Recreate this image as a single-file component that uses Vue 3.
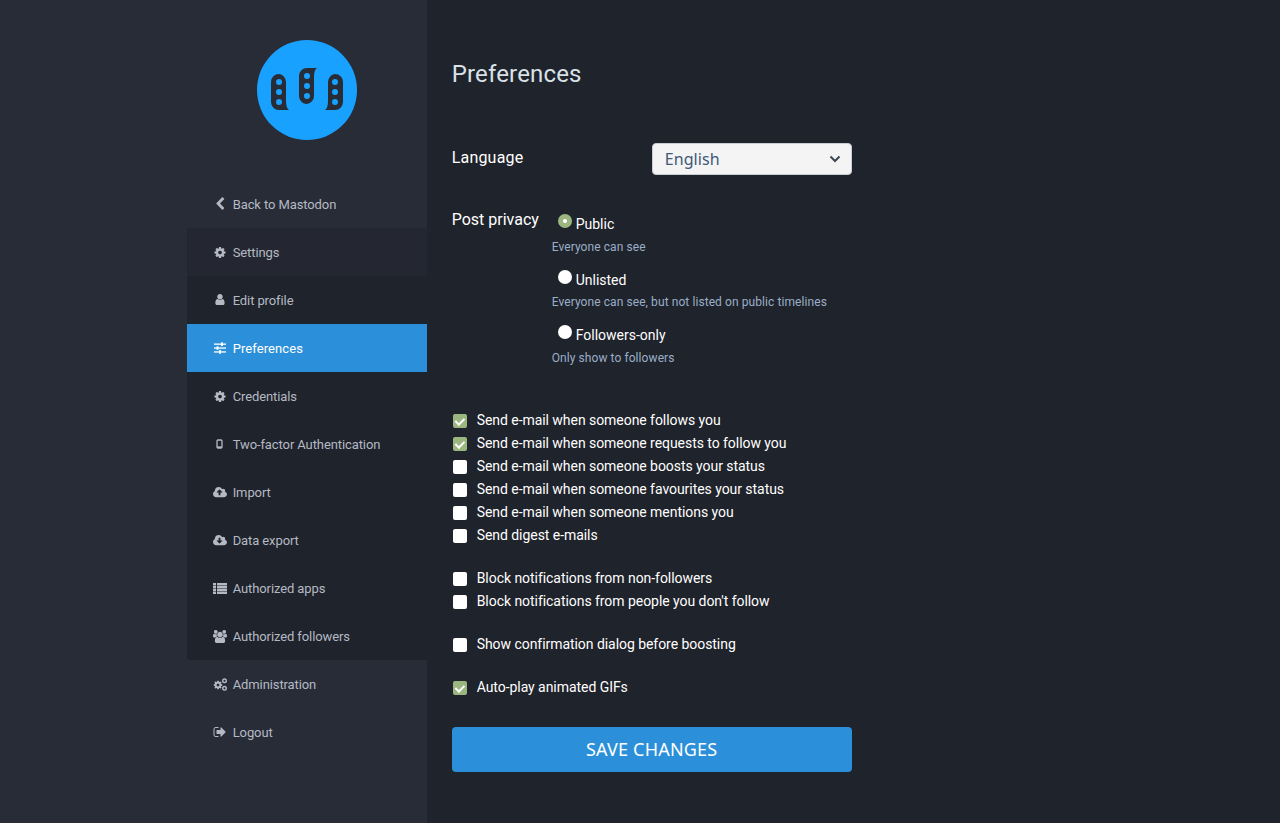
<script setup>
const cog = 'M1152 896q0-106-75-181t-181-75-181 75-75 181 75 181 181 75 181-75 75-181zm512-109v222q0 12-8 23t-20 13l-185 28q-19 54-39 91 35 50 107 138 10 12 10 25t-9 23q-27 37-99 108t-94 71q-12 0-26-9l-138-108q-44 23-91 38-16 136-29 186-7 28-36 28h-222q-14 0-24.500-8.500t-11.500-21.500l-28-184q-49-16-90-37l-141 107q-10 9-25 9-14 0-25-11-126-114-165-168-7-10-7-23 0-12 8-23 15-21 51-66.500t54-70.500q-27-50-41-99l-183-27q-13-2-21-12.500t-8-23.500v-222q0-12 8-23t19-13l186-28q14-46 39-92-40-57-107-138-10-12-10-24 0-10 9-23 26-36 98.500-107.500t94.500-71.500q13 0 26 10l138 107q44-23 91-38 16-136 29-186 7-28 36-28h222q14 0 24.500 8.500t11.500 21.500l28 184q49 16 90 37l142-107q9-9 24-9 13 0 25 10 129 119 165 170 7 8 7 22 0 12-8 23-15 21-51 66.500t-54 70.500q26 50 41 98l183 28q13 2 21 12.500t8 23.500z'
const cloudTail = 'zm640 288q0 159-112.500 271.500t-271.500 112.500h-1088q-185 0-316.500-131.500t-131.500-316.500q0-130 70-240t188-165q-2-30-2-43 0-212 150-362t362-150q156 0 285.500 87t188.500 231q71-62 166-62 106 0 181 75t75 181q0 76-41 138 130 31 213.500 135.500t83.500 238.500z'
const icons = {
  back: { vb: '0 0 1792 1792', w: 14, d: 'M1427 301l-531 531 531 531q19 19 19 45t-19 45l-166 166q-19 19-45 19t-45-19l-742-742q-19-19-19-45t19-45l742-742q19-19 45-19t45 19l166 166q19 19 19 45t-19 45z' },
  cog: { vb: '128 0 1536 1792', w: 12, d: cog },
  user: { vb: '128 128 1408 1664', w: 11, d: 'M1536 1399q0 109-62.500 187t-150.500 78h-854q-88 0-150.500-78t-62.500-187q0-85 8.500-160.500t31.500-152 58.500-131 94-89 134.500-34.500q131 128 313 128t313-128q76 0 134.500 34.500t94 89 58.500 131 31.500 152 8.500 160.500zm-256-887q0 159-112.500 271.500t-271.500 112.500-271.500-112.500-112.500-271.500 112.500-271.500 271.500-112.500 271.500 112.500 112.500 271.500z' },
  upload: { vb: '0 128 1920 1536', w: 14, d: 'M1280 864q0-14-9-23l-352-352q-9-9-23-9t-23 9l-351 351q-10 12-10 24 0 14 9 23t23 9h224v352q0 13 9.500 22.500t22.500 9.500h192q13 0 22.500-9.500t9.500-22.500v-352h224q13 0 22.500-9.500t9.500-22.500' + cloudTail },
  download: { vb: '0 128 1920 1536', w: 14, d: 'M1280 928q0-14-9-23t-23-9h-224v-352q0-13-9.500-22.500t-22.500-9.500h-192q-13 0-22.500 9.500t-9.500 22.500v352h-224q-13 0-22.500 9.500t-9.500 22.500q0 14 9 23l352 352q9 9 23 9t23-9l351-351q10-12 10-24' + 'zm640 224q0 159-112.500 271.500t-271.500 112.500h-1088q-185 0-316.500-131.500t-131.500-316.500q0-130 70-240t188-165q-2-30-2-43 0-212 150-362t362-150q156 0 285.500 87t188.500 231q71-62 166-62 106 0 181 75t75 181q0 76-41 138 130 31 213.500 135.500t83.500 238.500z' },
  users: { vb: '0 128 1920 1536', w: 14, d: 'M593 896q-162 5-265 128h-134q-82 0-138-40.500t-56-118.500q0-353 124-353 6 0 43.500 21t97.500 42.500 119 21.500q67 0 133-23-5 37-5 66 0 139 81 256zm1071 637q0 120-73 189.500t-194 69.500h-874q-121 0-194-69.500t-73-189.500q0-53 3.500-103.500t14-109 26.500-108.500 43-97.500 62-81 85.500-53.500 111.500-20q10 0 43 21.500t73 48 107 48 135 21.500 135-21.500 107-48 73-48 43-21.500q61 0 111.500 20t85.500 53.500 62 81 43 97.500 26.500 108.500 14 109 3.500 103.500zm-1024-1277q0 106-75 181t-181 75-181-75-75-181 75-181 181-75 181 75 75 181zm704 384q0 159-112.500 271.500t-271.500 112.500-271.500-112.500-112.500-271.500 112.500-271.500 271.500-112.500 271.500 112.500 112.500 271.500zm576 225q0 78-56 118.500t-138 40.500h-134q-103-123-265-128 81-117 81-256 0-29-5-66 66 23 133 23 59 0 119-21.500t97.500-42.500 43.500-21q124 0 124 353zm-128-609q0 106-75 181t-181 75-181-75-75-181 75-181 181-75 181 75 75 181z' },
  logout: { vb: '0 128 1664 1536', w: 13, d: 'M704 1440q0 4 1 20t.5 26.500-3 23.500-10 19.500-20.500 6.500h-320q-119 0-203.500-84.500t-84.500-203.500v-704q0-119 84.500-203.500t203.500-84.500h320q13 0 22.500 9.500t9.500 22.500q0 4 1 20t.5 26.500-3 23.500-10 19.500-20.500 6.500h-320q-66 0-113 47t-47 113v704q0 66 47 113t113 47h312l11.500 1 11.500 3 8 5.500 7 9 2 13.500zm928-544q0 26-19 45l-544 544q-19 19-45 19t-45-19-19-45v-288h-448q-26 0-45-19t-19-45v-384q0-26 19-45t45-19h448v-288q0-26 19-45t45-19 45 19l544 544q19 19 19 45z' },
}
const subNav = [
  { label: 'Preferences', icon: 'sliders', active: true },
  { label: 'Credentials', icon: 'cog' },
  { label: 'Two-factor Authentication', icon: 'mobile' },
  { label: 'Import', icon: 'upload' },
  { label: 'Data export', icon: 'download' },
  { label: 'Authorized apps', icon: 'list' },
  { label: 'Authorized followers', icon: 'users' },
]
const radios = [
  { label: 'Public', hint: 'Everyone can see', checked: true },
  { label: 'Unlisted', hint: 'Everyone can see, but not listed on public timelines' },
  { label: 'Followers-only', hint: 'Only show to followers' },
]
const groups = [
  [
    { label: 'Send e-mail when someone follows you', checked: true },
    { label: 'Send e-mail when someone requests to follow you', checked: true },
    { label: 'Send e-mail when someone boosts your status' },
    { label: 'Send e-mail when someone favourites your status' },
    { label: 'Send e-mail when someone mentions you' },
    { label: 'Send digest e-mails' },
  ],
  [
    { label: 'Block notifications from non-followers' },
    { label: "Block notifications from people you don't follow" },
  ],
  [{ label: 'Show confirmation dialog before boosting' }],
  [{ label: 'Auto-play animated GIFs', checked: true }],
]
</script>

<template>
  <div class="page">
    <aside class="side">
      <div class="side-inner">
        <div class="logo">
          <svg width="100" height="100" viewBox="0 0 100 100">
            <circle cx="50" cy="50" r="50" fill="#19a1ff" />
            <path d="M22 34a8 8 0 0 0-8 8v20a8 8 0 0 0 8 8h10q-3-2-3-9V42a8 8 0 0 0-7-8z" fill="#282c37" />
            <path d="M78 34a8 8 0 0 1 8 8v20a8 8 0 0 1-8 8H68q3-2 3-9V42a8 8 0 0 1 7-8z" fill="#282c37" />
            <path d="M50 64a8 8 0 0 1-8-8V36a8 8 0 0 1 8-8h10q-3 2-3 9v19a8 8 0 0 1-7 8z" fill="#282c37" />
            <g fill="#19a1ff">
              <circle cx="22" cy="42" r="3" /><circle cx="22" cy="52" r="3" /><circle cx="22" cy="62" r="3" />
              <circle cx="50" cy="36" r="3" /><circle cx="50" cy="46" r="3" /><circle cx="50" cy="56" r="3" />
              <circle cx="78" cy="42" r="3" /><circle cx="78" cy="52" r="3" /><circle cx="78" cy="62" r="3" />
            </g>
          </svg>
        </div>
        <nav class="nav">
          <a class="item"><span class="ic"><svg :width="icons.back.w" height="14" :viewBox="icons.back.vb"><path :d="icons.back.d" fill="currentColor" /></svg></span>Back to Mastodon</a>
          <div class="panel">
            <a class="item lighter"><span class="ic"><svg :width="icons.cog.w" height="13" :viewBox="icons.cog.vb"><path :d="icons.cog.d" fill="currentColor" /></svg></span>Settings</a>
            <a class="item"><span class="ic"><svg :width="icons.user.w" height="12" :viewBox="icons.user.vb"><path :d="icons.user.d" fill="currentColor" /></svg></span>Edit profile</a>
            <a v-for="n in subNav" :key="n.label" class="item" :class="{ active: n.active }">
              <span class="ic">
                <svg v-if="n.icon === 'sliders'" class="nudge" width="12" height="12" viewBox="0 0 12 12" fill="currentColor">
                  <rect x="0" y="1.500" width="12" height="1.300" /><rect x="0" y="5.400" width="12" height="1.300" /><rect x="0" y="9.300" width="12" height="1.300" />
                  <rect x="7" y="0.300" width="2" height="3.600" rx=".5" /><rect x="2.500" y="4.200" width="2" height="3.600" rx=".5" /><rect x="5" y="8.100" width="2" height="3.600" rx=".5" />
                </svg>
                <svg v-else-if="n.icon === 'mobile'" width="7" height="10" viewBox="0 0 7 10">
                  <rect x="1" y="1" width="5" height="8" rx="1" fill="none" stroke="currentColor" stroke-width="1.300" />
                  <rect x="1" y="7.400" width="5" height="1.600" fill="currentColor" />
                </svg>
                <svg v-else-if="n.icon === 'list'" width="14" height="11" viewBox="0 0 14 11" fill="currentColor">
                  <rect x="0" y="0" width="3" height="2.500" /><rect x="4" y="0" width="10" height="2.500" />
                  <rect x="0" y="3" width="3" height="2.500" /><rect x="4" y="3" width="10" height="2.500" />
                  <rect x="0" y="6" width="3" height="2.500" /><rect x="4" y="6" width="10" height="2.500" />
                  <rect x="0" y="9" width="3" height="2" /><rect x="4" y="9" width="10" height="2" />
                </svg>
                <svg v-else :width="icons[n.icon].w" height="13" :viewBox="icons[n.icon].vb"><path :d="icons[n.icon].d" fill="currentColor" /></svg>
              </span>{{ n.label }}
            </a>
          </div>
          <a class="item">
            <span class="ic">
              <svg width="14" height="13" viewBox="0 0 14 13">
                <svg x="0" y="2" width="10" height="10" viewBox="128 0 1536 1792"><path :d="icons.cog.d" fill="currentColor" /></svg>
                <circle cx="11.500" cy="2.800" r="1.800" fill="none" stroke="currentColor" stroke-width="1.400" />
                <circle cx="11.500" cy="10.300" r="1.800" fill="none" stroke="currentColor" stroke-width="1.400" />
              </svg>
            </span>Administration
          </a>
          <a class="item"><span class="ic"><svg :width="icons.logout.w" height="12" :viewBox="icons.logout.vb"><path :d="icons.logout.d" fill="currentColor" /></svg></span>Logout</a>
        </nav>
      </div>
    </aside>
    <main class="main">
      <form class="content" @submit.prevent>
        <h1>Preferences</h1>
        <div class="lang">
          <label class="big">Language</label>
          <div class="select">English
            <svg width="12" height="8" viewBox="0 0 12 8"><path d="M1.500 1.500L6 6l4.500-4.500" fill="none" stroke="#3e4654" stroke-width="2" /></svg>
          </div>
        </div>
        <div class="privacy">
          <div class="big plabel">Post privacy</div>
          <div class="rlist">
            <div v-for="r in radios" :key="r.label" class="ropt">
              <label class="rlabel"><span class="radio" :class="{ on: r.checked }"></span>{{ r.label }}</label>
              <div class="hint">{{ r.hint }}</div>
            </div>
          </div>
        </div>
        <div v-for="(g, i) in groups" :key="i" class="group">
          <label v-for="c in g" :key="c.label" class="check">
            <input type="checkbox" :checked="c.checked" />{{ c.label }}
          </label>
        </div>
        <button class="save" type="submit">SAVE CHANGES</button>
      </form>
    </main>
  </div>
</template>

<style>
html, body { margin: 0; background: #1f232b; }
</style>

<style scoped>
.page {
  display: flex;
  height: 823px;
  overflow: hidden;
  font-family: Roboto, "Liberation Sans", sans-serif;
  color: #fff;
  text-rendering: optimizeLegibility;
}
.side {
  flex: 1 1 0;
  background: #282c37;
  display: flex;
  justify-content: flex-end;
}
.side-inner { width: 240px; }
.logo {
  display: flex;
  justify-content: center;
  padding: 40px 0;
  height: 100px;
}
.nav { display: block; }
.item {
  display: flex;
  align-items: center;
  height: 48px;
  padding-left: 46px;
  font-size: 13px;
  letter-spacing: -0.1px;
  color: #b4b9c4;
  position: relative;
  box-sizing: border-box;
}
.ic {
  position: absolute;
  left: 24px;
  width: 18px;
  height: 48px;
  display: flex;
  align-items: center;
  justify-content: center;
  top: 0;
}
.nudge { margin-left: 1px; }
.panel { background: #1f232b; border-radius: 4px 0 0 4px; overflow: hidden; }
.lighter { background: #242731; }
.active { background: #2b90d9; color: #fff; letter-spacing: 0.08px; }
.main { flex: 2 2 0; background: #1f232b; }
.content { width: 400px; padding: 60px 25px 0; }
h1 {
  margin: 0;
  font-size: 24px;
  font-weight: 400;
  line-height: 28px;
  letter-spacing: 0.17px;
  color: #d9e1e8;
}
.big { font-size: 16px; line-height: 19px; color: #fff; }
.lang {
  display: flex;
  align-items: flex-start;
  margin-top: 55px;
}
.lang .big { width: 200px; padding-top: 5px; letter-spacing: 0.2px; }
.select {
  width: 200px;
  height: 32px;
  box-sizing: border-box;
  background: #f4f4f4;
  border: 1px solid #c9ccd1;
  border-radius: 4px;
  padding-left: 12px;
  display: flex;
  align-items: center;
  justify-content: space-between;
  font-family: "Noto Sans", sans-serif;
  font-size: 16px;
  letter-spacing: 0.1px;
  color: #3f5878;
}
.select svg { margin-right: 10px; }
.privacy { display: flex; margin-top: 34px; }
.plabel { width: 100px; padding-top: 1px; }
.rlist { display: flex; flex-direction: column; gap: 13px; }
.ropt { height: 42px; }
.rlabel {
  display: flex;
  align-items: center;
  font-size: 14px;
  line-height: 16px;
  height: 22px;
  padding-left: 6px;
  padding-top: 5px;
  color: #fff;
}
.ropt:first-child .rlabel { padding-top: 4px; padding-bottom: 1px; }
.ropt:last-child .hint { margin-top: 5px; }
.radio {
  width: 14px;
  height: 14px;
  border-radius: 50%;
  background: #fff;
  margin-right: 4px;
  margin-top: -6px;
  box-sizing: border-box;
  flex: none;
}
.radio.on { background: radial-gradient(circle, #fff 0 1.500px, #9bb77f 2.500px); }
.hint { font-size: 12px; line-height: 14px; letter-spacing: 0.08px; color: #9baec8; margin-top: 4px; }
.group { display: flex; flex-direction: column; margin-bottom: 20px; }
.privacy + .group { margin-top: 47px; }
.check {
  display: flex;
  align-items: center;
  height: 23px;
  font-size: 14px;
  letter-spacing: -0.05px;
  color: #fff;
}
.check input {
  appearance: none;
  width: 14px;
  height: 14px;
  margin: 2px 10px 0 1px;
  background: #fff;
  border-radius: 2px;
  position: relative;
  flex: none;
}
.check input:checked { background: #9bb77f; }
.check input:checked::after {
  content: "";
  position: absolute;
  left: 4.500px;
  top: 2px;
  width: 3.500px;
  height: 7px;
  border: solid #fff;
  border-width: 0 2px 2px 0;
  transform: rotate(45deg);
  box-sizing: content-box;
}
.save {
  display: block;
  width: 400px;
  height: 45px;
  margin-top: 29px;
  padding: 0 0 2px;
  border: 0;
  border-radius: 4px;
  background: #2b90d9;
  color: #fff;
  font-family: "Noto Sans", sans-serif;
  font-size: 18px;
  font-weight: 400;
  letter-spacing: 0.2px;
}
</style>
